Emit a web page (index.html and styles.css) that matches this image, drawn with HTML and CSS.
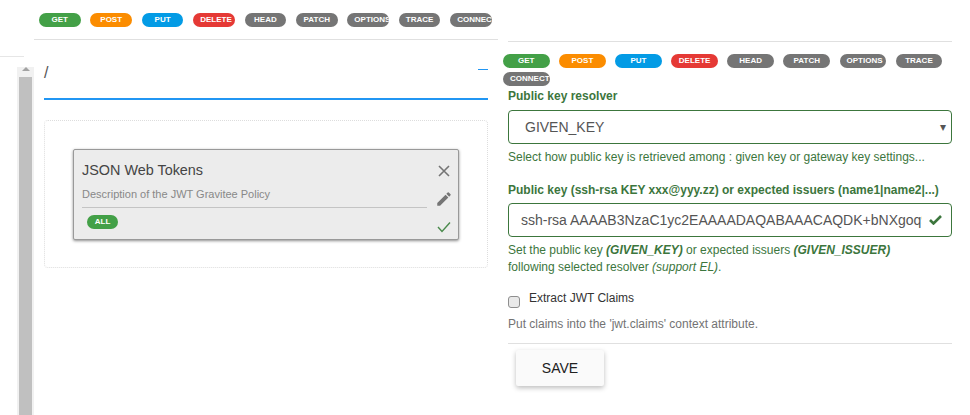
FILE: index.html
```html
<!DOCTYPE html>
<html lang="en">
<head>
    <meta charset="UTF-8">
    <title>JWT Policy</title>
    <link rel="stylesheet" href="styles.css">
</head>
<body>
    <div class="side">
        <div class="side-line"></div>
        <div class="scrollbar">
            <div class="scroll-arrow"></div>
            <div class="scroll-thumb"></div>
        </div>
    </div>

    <div class="center">
        <div class="pills pills-small">
            <span class="pill green">GET</span>
            <span class="pill orange">POST</span>
            <span class="pill blue">PUT</span>
            <span class="pill red">DELETE</span>
            <span class="pill grey">HEAD</span>
            <span class="pill grey">PATCH</span>
            <span class="pill grey">OPTIONS</span>
            <span class="pill grey">TRACE</span>
            <span class="pill grey">CONNECT</span>
        </div>
        <div class="rule"></div>
        <div class="path-box">
            <div class="path-row">
                <span class="path-text">/</span>
                <span class="path-dash"></span>
            </div>
            <div class="dropzone">
                <div class="card">
                    <div class="card-body">
                        <div class="card-title">JSON Web Tokens</div>
                        <div class="card-desc">Description of the JWT Gravitee Policy</div>
                        <div class="card-foot">
                            <span class="pill green all">ALL</span>
                        </div>
                    </div>
                    <div class="card-icons">
                        <svg width="16" height="16" viewBox="0 0 16 16"><path d="M3 3l10 10M13 3L3 13" stroke="#757575" stroke-width="1.6" fill="none"/></svg>
                        <svg width="18" height="18" viewBox="0 0 24 24"><path d="M3 17.25V21h3.75L17.81 9.94l-3.75-3.75L3 17.25zM20.71 7.04a1 1 0 0 0 0-1.41l-2.34-2.34a1 1 0 0 0-1.41 0l-1.83 1.83 3.75 3.75 1.83-1.83z" fill="#757575"/></svg>
                        <svg width="16" height="16" viewBox="0 0 16 16"><path d="M2 8l4 4.5 8-9" stroke="#4a8a4c" stroke-width="1.4" fill="none"/></svg>
                    </div>
                </div>
            </div>
        </div>
    </div>

    <div class="right">
        <div class="rule rule-inset"></div>
        <div class="pills pills-large">
            <span class="pill green">GET</span>
            <span class="pill orange">POST</span>
            <span class="pill blue">PUT</span>
            <span class="pill red">DELETE</span>
            <span class="pill grey">HEAD</span>
            <span class="pill grey">PATCH</span>
            <span class="pill grey">OPTIONS</span>
            <span class="pill grey">TRACE</span>
            <span class="pill grey">CONNECT</span>
        </div>
        <form class="form">
            <label class="field-label">Public key resolver</label>
            <div class="control control-select">
                <span>GIVEN_KEY</span>
                <span class="caret">&#9662;</span>
            </div>
            <p class="help">Select how public key is retrieved among : given key or gateway key settings...</p>

            <label class="field-label second">Public key (ssh-rsa KEY xxx@yyy.zz) or expected issuers (name1|name2|...)</label>
            <div class="control control-input">
                <input type="text" value="ssh-rsa AAAAB3NzaC1yc2EAAAADAQABAAACAQDK+bNXgoq9Yd3vLw">
                <svg width="13" height="10" viewBox="0 0 13 10"><path d="M1 5l3.5 3.5L12 1" stroke="#3c763d" stroke-width="2.6" fill="none"/></svg>
            </div>
            <p class="help">Set the public key <em><b>(GIVEN_KEY)</b></em> or expected issuers <em><b>(GIVEN_ISSUER)</b></em><br>following selected resolver <em>(support EL)</em>.</p>

            <label class="check-row">
                <input type="checkbox">
                <span>Extract JWT Claims</span>
            </label>
            <p class="help muted">Put claims into the 'jwt.claims' context attribute.</p>
            <div class="rule form-rule"></div>
            <button type="button" class="save-btn">SAVE</button>
        </form>
    </div>
</body>
</html>
```

FILE: styles.css
```css
html, body {
    margin: 0;
    height: 415px;
    overflow: hidden;
}
body {
    display: flex;
    font-family: "Liberation Sans", Arial, sans-serif;
    background-color: #fff;
    color: #333;
}

/* left column, only the edge of it is visible */
.side {
    width: 34px;
    flex: none;
}
.side-line {
    width: 24px;
    height: 1px;
    margin-top: 56px;
    background-color: #e6e6e6;
}
.scrollbar {
    width: 17px;
    height: 348px;
    margin: 10px 0 0 17px;
    background-color: #f1f1f1;
}
.scroll-arrow {
    width: 0;
    height: 0;
    margin: 7px auto 0;
    border-left: 4px solid transparent;
    border-right: 4px solid transparent;
    border-bottom: 4px solid #a3a3a3;
}
.scroll-thumb {
    width: 13px;
    height: 340px;
    margin: 6px 0 0 2px;
    background-color: #c0c0c0;
}

/* http method pills */
.pills {
    display: flex;
    flex-wrap: wrap;
}
.pill {
    flex: none;
    height: 14px;
    line-height: 14px;
    box-sizing: border-box;
    padding: 0 7px;
    border-radius: 7px;
    font-size: 8px;
    font-weight: bold;
    color: #fff;
    text-align: center;
    overflow: hidden;
    white-space: nowrap;
}
.green { background-color: #43a047; }
.orange { background-color: #fb8c00; }
.blue { background-color: #039be5; }
.red { background-color: #e53935; }
.grey { background-color: #757575; }

.pills-small {
    gap: 9.8px;
    padding: 13px 0 0 5px;
    height: 26px;
}
.pills-small .pill {
    width: 41.6px;
}
.pills-large {
    gap: 4px 9.5px;
    padding-top: 12px;
}
.pills-large .pill {
    width: 46.6px;
}

.rule {
    height: 1px;
    background-color: #e0e0e0;
}

/* center column */
.center {
    width: 464px;
    flex: none;
}
.path-box {
    padding: 0 10px;
}
.path-row {
    display: flex;
    justify-content: space-between;
    height: 60px;
    box-sizing: border-box;
    padding-top: 24px;
    border-bottom: 2px solid #2196f3;
}
.path-text {
    font-size: 16px;
    line-height: 18px;
    color: #555;
}
.path-dash {
    width: 10px;
    height: 1px;
    margin-top: 5px;
    background-color: #2196f3;
}
.dropzone {
    margin-top: 20px;
    height: 148px;
    box-sizing: border-box;
    padding: 28px 28px 0;
    border: 1px dotted #ddd;
    border-radius: 4px;
}
.card {
    display: flex;
    height: 91px;
    box-sizing: border-box;
    border: 1px solid #999;
    border-radius: 2px;
    background-color: #ececec;
    box-shadow: 0 1px 3px rgba(0, 0, 0, 0.45);
}
.card-body {
    flex: none;
    width: 345px;
    margin-left: 8px;
}
.card-title {
    margin-top: 11px;
    font-size: 14.4px;
    line-height: 18px;
    color: #444;
}
.card-desc {
    margin-top: 8px;
    padding-bottom: 6px;
    border-bottom: 1px solid #c4c4c4;
    font-size: 11px;
    line-height: 14px;
    color: #888;
}
.card-foot {
    padding: 7px 0 0 5px;
}
.all {
    display: inline-block;
    width: 31px;
    padding: 0;
}
.card-icons {
    display: flex;
    flex-direction: column;
    align-items: center;
    justify-content: space-between;
    flex: none;
    width: 28px;
    margin-left: 3px;
    padding: 13px 0 4px;
    box-sizing: border-box;
}

/* right column */
.right {
    flex: 1;
    padding: 41px 18px 0 5px;
    min-width: 0;
}
.rule-inset {
    margin-left: 5px;
}
.form {
    padding-left: 5px;
}
.field-label {
    display: block;
    margin-top: 2px;
    font-size: 12px;
    font-weight: bold;
    line-height: 17px;
    color: #3c763d;
}
.second {
    margin-top: 16px;
}
.control {
    display: flex;
    align-items: center;
    height: 34px;
    margin-top: 5px;
    box-sizing: border-box;
    border: 1px solid #3c763d;
    border-radius: 4px;
    font-size: 14px;
    color: #555;
}
.control-select {
    justify-content: space-between;
    padding: 0 5px 0 16px;
}
.caret {
    font-size: 12px;
}
.control-input {
    margin-top: 4px;
    padding: 0 9px 0 12px;
    gap: 7px;
}
.control-input input {
    flex: 1;
    min-width: 0;
    padding: 0;
    border: 0;
    outline: 0;
    font: inherit;
    color: #555;
}
.help {
    margin: 5px 0 0;
    font-size: 12px;
    line-height: 17px;
    color: #3c763d;
}
.muted {
    margin-top: 8px;
    color: #737373;
}
.check-row {
    display: flex;
    align-items: center;
    gap: 9px;
    margin-top: 15px;
    font-size: 12px;
    line-height: 17px;
}
.check-row input {
    appearance: none;
    width: 12px;
    height: 12px;
    margin: 5px 0 0;
    border: 1px solid #8e8e8e;
    border-radius: 3px;
    background-color: #e9e9e9;
}
.check-row span {
    margin-top: -3px;
}
.form-rule {
    margin-top: 10px;
}
.save-btn {
    display: block;
    width: 88px;
    height: 36px;
    margin: 6px 0 0 8px;
    border: 0;
    border-radius: 2px;
    background-color: #fafafa;
    box-shadow: 0 2px 5px rgba(0, 0, 0, 0.26);
    font-family: inherit;
    font-size: 14px;
    color: #212121;
}
```
